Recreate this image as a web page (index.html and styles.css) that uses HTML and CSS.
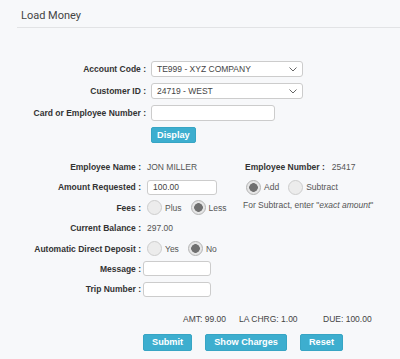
FILE: index.html
```html
<!DOCTYPE html>
<html lang="en">
<head>
  <meta charset="UTF-8" />
  <meta name="viewport" content="width=device-width, initial-scale=1.0"/>
  <title>Load Money</title>
  <link rel="stylesheet" href="styles.css">
</head>
<body>
  <div class="title">Load Money</div>

  <!-- account lookup -->
  <div class="lookup">
    <label class="lbl">Account Code :</label>
    <div class="select">
      <span>TE999 - XYZ COMPANY</span>
      <svg width="8" height="5" viewBox="0 0 8 5"><path d="M0.5 0.5 L4 4 L7.5 0.5" fill="none" stroke="#666" stroke-width="1"/></svg>
    </div>

    <label class="lbl">Customer ID :</label>
    <div class="select">
      <span>24719 - WEST</span>
      <svg width="8" height="5" viewBox="0 0 8 5"><path d="M0.5 0.5 L4 4 L7.5 0.5" fill="none" stroke="#666" stroke-width="1"/></svg>
    </div>

    <label class="lbl">Card or Employee Number :</label>
    <input type="text" class="text-input card-input" />

    <span></span>
    <div><button class="btn display-btn">Display</button></div>
  </div>

  <!-- employee details -->
  <div class="details">
    <span class="lbl">Employee Name :</span>
    <span class="val">JON MILLER</span>
    <span class="side"><b>Employee Number :</b><span class="val emp-no">25417</span></span>

    <span class="lbl">Amount Requested :</span>
    <input type="text" class="text-input amount-input" value="100.00" />
    <span class="side radio-group">
      <span class="radio-opt"><span class="radio on"></span>Add</span>
      <span class="radio-opt"><span class="radio"></span>Subtract</span>
    </span>

    <span class="lbl">Fees :</span>
    <span class="radio-group">
      <span class="radio-opt"><span class="radio"></span>Plus</span>
      <span class="radio-opt"><span class="radio on"></span>Less</span>
    </span>
    <span class="note">For Subtract, enter "<i>exact amount</i>"</span>

    <span class="lbl">Current Balance :</span>
    <span class="val">297.00</span>
    <span></span>

    <span class="lbl">Automatic Direct Deposit :</span>
    <span class="radio-group">
      <span class="radio-opt"><span class="radio"></span>Yes</span>
      <span class="radio-opt"><span class="radio on"></span>No</span>
    </span>
    <span></span>

    <span class="lbl">Message :</span>
    <input type="text" class="text-input short-input" />
    <span></span>

    <span class="lbl">Trip Number :</span>
    <input type="text" class="text-input short-input" />
    <span></span>
  </div>

  <div class="totals">
    <span class="tot-amt">AMT: 99.00</span>
    <span class="tot-chrg">LA CHRG: 1.00</span>
    <span>DUE: 100.00</span>
  </div>

  <div class="actions">
    <button class="btn">Submit</button>
    <button class="btn">Show Charges</button>
    <button class="btn">Reset</button>
  </div>
</body>
</html>
```

FILE: styles.css
```css
body {
  margin: 0;
  background-color: #f7f8fa;
  font-family: "Liberation Sans", Arial, sans-serif;
  font-size: 8.5px;
  color: #333;
}

.title {
  margin-left: 17px;
  padding: 10px 0 5px 4px;
  line-height: 12px;
  border-bottom: 1px solid #e2e3e5;
  font-family: Roboto, "Liberation Sans", sans-serif;
  font-size: 11px;
  color: #444;
}

.lbl {
  text-align: right;
  font-weight: bold;
  color: #333;
}

.val {
  color: #555;
}

/* lookup section */
.lookup {
  display: grid;
  grid-template-columns: 146px auto;
  grid-auto-rows: 16px;
  column-gap: 5px;
  row-gap: 6px;
  align-items: center;
  margin-top: 33px;
}

.select {
  width: 152px;
  height: 16px;
  box-sizing: border-box;
  display: flex;
  align-items: center;
  justify-content: space-between;
  padding: 0 5px 0 5px;
  background-color: #fff;
  border: 1px solid #ccc;
  border-radius: 3px;
  color: #444;
}

.text-input {
  height: 16px;
  box-sizing: border-box;
  margin: 0;
  padding: 0 5px;
  background-color: #fff;
  border: 1px solid #ccc;
  border-radius: 3px;
  font-family: inherit;
  font-size: 8.5px;
  color: #444;
}

.card-input {
  width: 124px;
}

.amount-input {
  width: 70px;
  height: 15px;
}

.short-input {
  width: 68px;
  height: 15px;
  margin-left: -4px;
}

.btn {
  height: 16px;
  padding: 0 6px;
  background-color: #3daecf;
  border: 1px solid #37a5c4;
  border-radius: 2px;
  color: #fff;
  font-family: inherit;
  font-size: 9.2px;
  font-weight: bold;
  cursor: pointer;
}

.display-btn {
  padding: 0 5px;
}

/* detail section */
.details {
  display: grid;
  grid-template-columns: 141px 92px auto;
  grid-auto-rows: 15px;
  column-gap: 6px;
  row-gap: 5.4px;
  align-items: center;
  margin-top: 16.5px;
}

.details .lbl,
.details .val,
.side,
.note {
  line-height: 10px;
}

.emp-no {
  margin-left: 7px;
}

.note {
  align-self: start;
  margin-left: -2px;
  color: #555;
}

.radio-group {
  display: flex;
  align-items: center;
  color: #555;
}

.side.radio-group {
  margin-left: 1px;
}

.radio-opt {
  display: flex;
  align-items: center;
  gap: 3px;
  margin-right: 9px;
}

.radio {
  width: 15px;
  height: 15px;
  box-sizing: border-box;
  border: 1px solid #cdcdcd;
  border-radius: 50%;
  background-color: #ececec;
}

.radio.on {
  background: radial-gradient(circle, #707070 0 4px, #e6e6e6 4.6px);
  border-color: #b4b4b4;
}

/* totals + actions */
.totals {
  display: flex;
  margin-top: 17px;
  padding-left: 183px;
  line-height: 10px;
  color: #444;
}

.tot-amt {
  width: 56px;
}

.tot-chrg {
  width: 84px;
}

.actions {
  display: flex;
  gap: 13px;
  margin-top: 10px;
  padding-left: 143px;
}

.actions .btn {
  height: 17px;
  padding: 0 8px;
}
```
